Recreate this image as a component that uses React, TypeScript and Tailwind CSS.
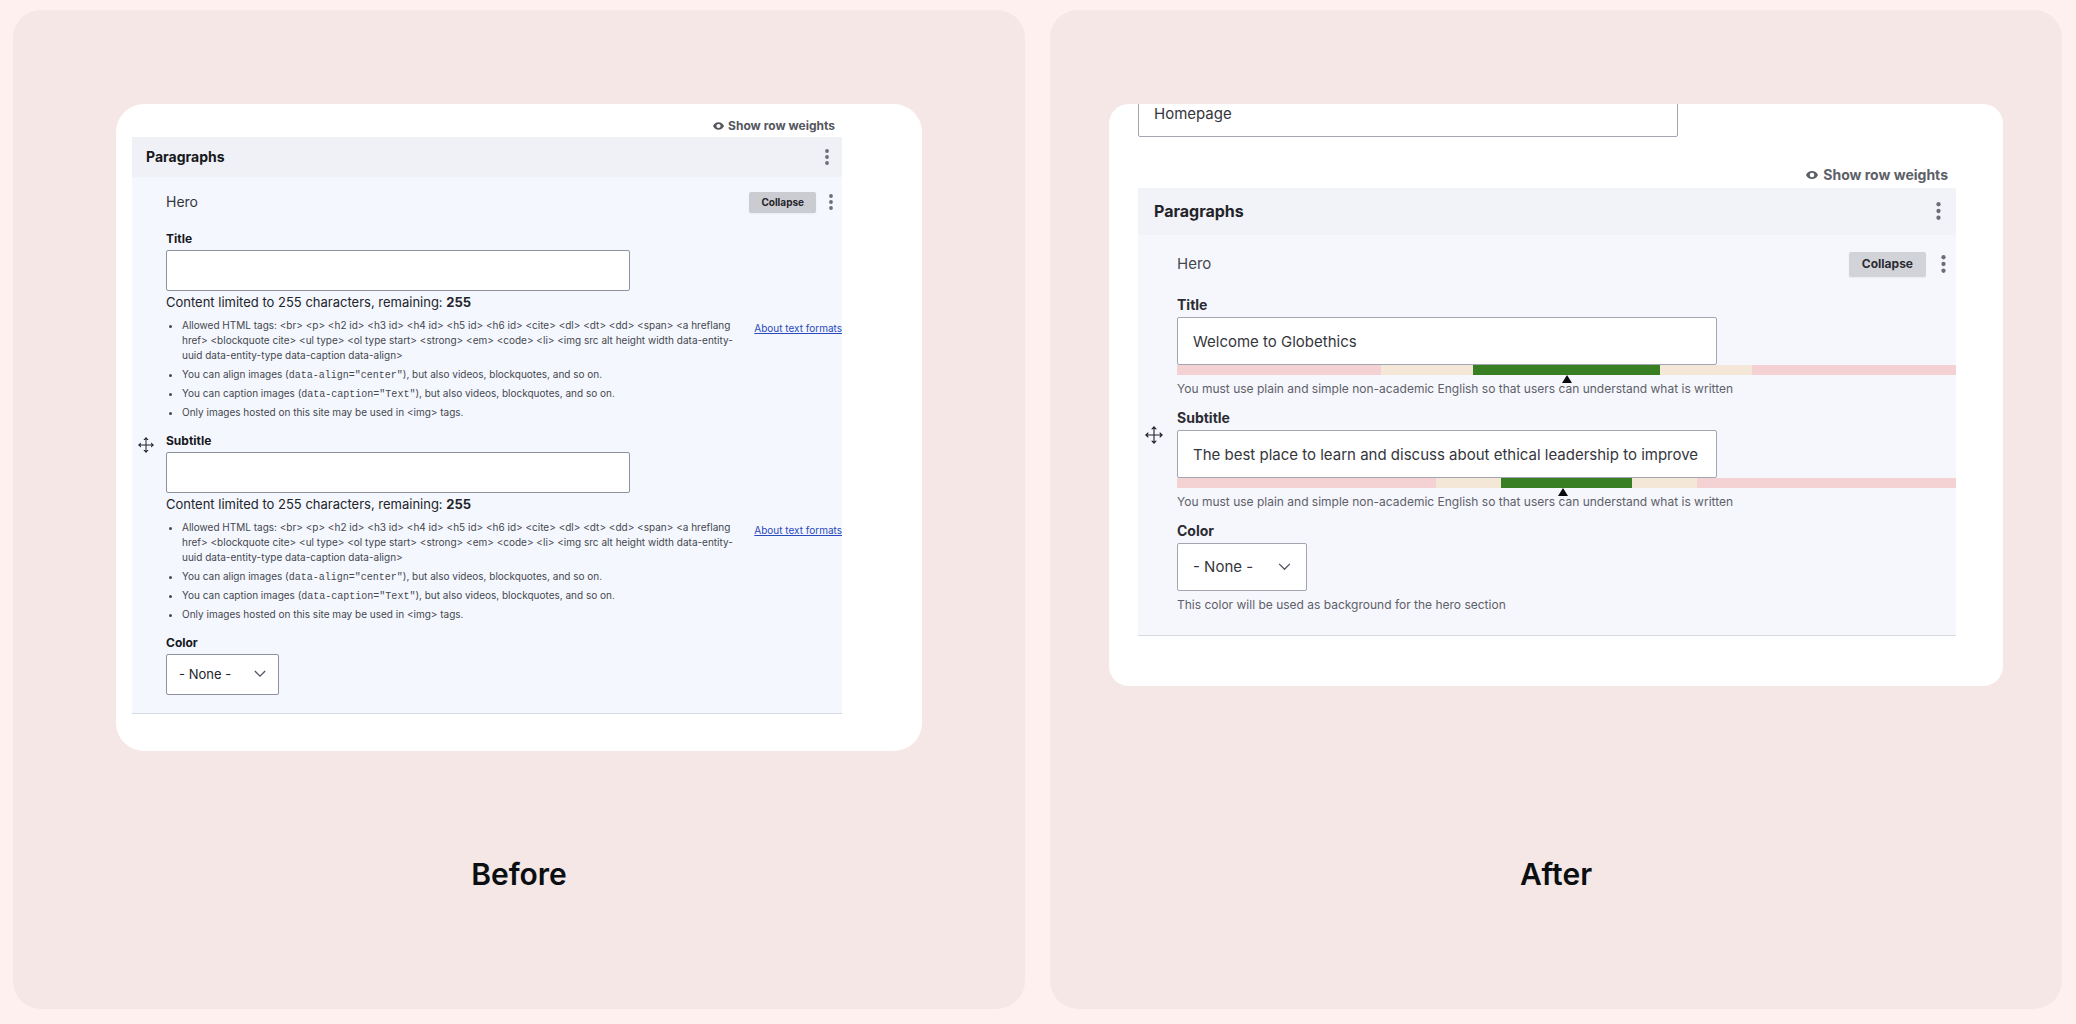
import type { ReactNode } from "react";

function EyeIcon({ className }: { className: string }) {
  return (
    <svg viewBox="0 0 12 8" className={className} aria-hidden="true">
      <path
        fillRule="evenodd"
        fill="currentColor"
        d="M6 0C3.300 0 1.100 1.600 0 4c1.100 2.400 3.300 4 6 4s4.900-1.600 6-4C10.900 1.600 8.700 0 6 0Zm0 6.300A2.300 2.300 0 1 1 6 1.700a2.300 2.300 0 0 1 0 4.600Z"
      />
    </svg>
  );
}

function DotsIcon({ className }: { className: string }) {
  return (
    <svg viewBox="0 0 4 16" className={className} fill="#6b6e76" aria-hidden="true">
      <circle cx="2" cy="2" r="1.900" />
      <circle cx="2" cy="8" r="1.900" />
      <circle cx="2" cy="14" r="1.900" />
    </svg>
  );
}

function MoveIcon({ className }: { className: string }) {
  return (
    <svg viewBox="0 0 16 16" className={className} aria-hidden="true">
      <path d="M8 1.500v13M1.500 8h13" stroke="#222330" strokeWidth="1" fill="none" />
      <path
        fill="#222330"
        d="M8 0l2.600 2.900H9L8 2 7 2.900H5.400ZM8 16l2.600-2.900H9L8 14l-1-.900H5.400ZM0 8l2.900-2.600V7L2 8l.900 1v1.600ZM16 8l-2.900-2.600V7l.900 1-.900 1v1.600Z"
      />
    </svg>
  );
}

function ChevronIcon({ className }: { className: string }) {
  return (
    <svg viewBox="0 0 14 9" className={className} fill="none" stroke="#545560" strokeWidth="1.500" aria-hidden="true">
      <path d="M1 1l6 6 6-6" />
    </svg>
  );
}

function Panel({ caption, children }: { caption: string; children: ReactNode }) {
  return (
    <figure className="relative flex min-w-0 flex-1 flex-col items-center rounded-[28px] bg-[#f4e7e5] pt-[94px]">
      {children}
      <figcaption className="absolute bottom-[113px] text-[30px] leading-[44px] font-semibold text-[#0b0f12]">
        {caption}
      </figcaption>
    </figure>
  );
}

function FormattedField({ id, label }: { id: string; label: string }) {
  return (
    <div>
      <label htmlFor={id} className="block text-[12px] leading-[22px] font-bold text-[#17181c]">
        {label}
      </label>
      <input
        id={id}
        type="text"
        className="block h-[41px] w-[464px] max-w-full rounded-xs border border-[#8e929c] bg-white px-3 text-[13px]"
      />
      <p className="text-[13px] leading-[22px] text-[#232429]">
        Content limited to 255 characters, remaining: <strong>255</strong>
      </p>
      <div className="mt-[5px] flex items-start justify-between gap-2">
        <ul className="ml-4 list-disc space-y-1 text-[10px] leading-[15px] text-[#45474e]">
          <li>
            Allowed HTML tags: &lt;br&gt; &lt;p&gt; &lt;h2 id&gt; &lt;h3 id&gt; &lt;h4 id&gt; &lt;h5 id&gt; &lt;h6
            id&gt; &lt;cite&gt; &lt;dl&gt; &lt;dt&gt; &lt;dd&gt; &lt;span&gt; &lt;a hreflang href&gt;
            &lt;blockquote cite&gt; &lt;ul type&gt; &lt;ol type start&gt; &lt;strong&gt; &lt;em&gt; &lt;code&gt;
            &lt;li&gt; &lt;img src alt height width data-entity-uuid data-entity-type data-caption data-align&gt;
          </li>
          <li>
            You can align images (
            <code className="font-['Liberation_Mono',monospace] leading-none">data-align="center"</code>), but also
            videos, blockquotes, and so on.
          </li>
          <li>
            You can caption images (
            <code className="font-['Liberation_Mono',monospace] leading-none">data-caption="Text"</code>), but also
            videos, blockquotes, and so on.
          </li>
          <li>Only images hosted on this site may be used in &lt;img&gt; tags.</li>
        </ul>
        <a href="#formats" className="mt-0.5 shrink-0 text-[10px] leading-4 text-[#2a49bd] underline">
          About text formats
        </a>
      </div>
    </div>
  );
}

function BeforeCard() {
  return (
    <div className="mx-[103px] self-stretch rounded-[28px] bg-white pr-20 pb-[37px] pl-4">
      <div className="flex h-[33px] items-center justify-end pt-[10px] pr-[7px]">
        <button className="flex items-center gap-1 text-[12px] leading-4 font-bold text-[#55575e]">
          <EyeIcon className="h-2 w-[11px]" />
          Show row weights
        </button>
      </div>
      <div className="flex h-10 items-center justify-between bg-[#f0f1f6] pr-[13px] pb-px pl-[14px]">
        <h2 className="text-[14px] font-bold text-[#17181c]">Paragraphs</h2>
        <button aria-label="Paragraphs actions">
          <DotsIcon className="h-4 w-1" />
        </button>
      </div>
      <div className="flex items-center border-b border-[#d4d9e4] bg-[#f4f7fe]">
        <button aria-label="Move Hero" className="flex w-[34px] shrink-0 justify-center pr-1.5">
          <MoveIcon className="size-4" />
        </button>
        <div className="min-w-0 flex-1 pt-[14px] pb-[18px]">
          <div className="flex h-[22px] items-center">
            <h3 className="flex-1 text-[14px] leading-5 text-[#35363c]">Hero</h3>
            <button className="h-[21px] rounded-xs bg-[#cbccd2] px-3 text-[10px] font-bold text-[#232429] shadow-xs">
              Collapse
            </button>
            <button aria-label="Hero actions" className="mr-[9px] ml-[13px]">
              <DotsIcon className="h-4 w-1" />
            </button>
          </div>
          <div className="mt-[15px] space-y-[10px]">
            <FormattedField id="before-title" label="Title" />
            <FormattedField id="before-subtitle" label="Subtitle" />
            <div>
              <label htmlFor="before-color" className="block text-[12px] leading-[22px] font-bold text-[#17181c]">
                Color
              </label>
              <div className="relative w-[113px]">
                <select
                  id="before-color"
                  className="block h-[41px] w-full appearance-none rounded-xs border border-[#8e929c] bg-white px-3 text-[13px] text-[#232429]"
                >
                  <option>- None -</option>
                </select>
                <ChevronIcon className="pointer-events-none absolute top-4 right-[13px] h-[8px] w-3" />
              </div>
            </div>
          </div>
        </div>
      </div>
    </div>
  );
}

type MeterProps = { segments: number[]; marker: number };

const METER_COLORS = ["bg-[#f4d1d3]", "bg-[#f4e7d7]", "bg-[#377f22]", "bg-[#f4e7d7]", "bg-[#f4d1d3]"];

function LengthMeter({ segments, marker }: MeterProps) {
  return (
    <div className="relative flex h-[10px]">
      {segments.map((grow, i) => (
        <div key={i} className={METER_COLORS[i]} style={{ flexGrow: grow, flexBasis: 0 }} />
      ))}
      <svg
        viewBox="0 0 10 8"
        className="absolute top-full h-2 w-[10px] -translate-x-1/2"
        style={{ left: `${marker}%` }}
        aria-hidden="true"
      >
        <path d="M5 0l5 8H0Z" fill="#0c0c0e" />
      </svg>
    </div>
  );
}

function MeteredField({ id, label, value, segments, marker }: { id: string; label: string; value: string } & MeterProps) {
  return (
    <div>
      <label htmlFor={id} className="block text-[14px] leading-6 font-bold text-[#2b2c32]">
        {label}
      </label>
      <input
        id={id}
        type="text"
        defaultValue={value}
        className="block h-12 w-[540px] max-w-full rounded-xs border border-[#a3a6b0] bg-white px-[15px] text-[15px] text-[#35363c]"
      />
      <LengthMeter segments={segments} marker={marker} />
      <p className="mt-1 text-[12px] leading-5 text-[#5d6068]">
        You must use plain and simple non-academic English so that users can understand what is written
      </p>
    </div>
  );
}

function AfterCard() {
  return (
    <div className="mx-[59px] self-stretch overflow-hidden rounded-[20px] bg-white pr-[47px] pb-[50px] pl-[29px]">
      <input
        aria-label="Page title"
        type="text"
        defaultValue="Homepage"
        className="-mt-[15px] block h-12 w-[540px] max-w-full rounded-xs border border-[#a3a6b0] bg-white px-[15px] text-[15px] text-[#35363c]"
      />
      <div className="flex h-[51px] items-end justify-end pr-2 pb-[3px]">
        <button className="flex items-center gap-[5px] text-[14px] leading-5 font-bold text-[#5d6068]">
          <EyeIcon className="h-2 w-3" />
          Show row weights
        </button>
      </div>
      <div className="flex h-[47px] items-center justify-between bg-[#f2f3f8] pr-[15px] pb-0.5 pl-4">
        <h2 className="text-[16px] font-bold text-[#232429]">Paragraphs</h2>
        <button aria-label="Paragraphs actions">
          <DotsIcon className="h-[18px] w-[5px]" />
        </button>
      </div>
      <div className="flex items-center border-b border-[#d8dae2] bg-[#f6f7fd]">
        <button aria-label="Move Hero" className="flex w-[39px] shrink-0 justify-center pr-[7px]">
          <MoveIcon className="size-[18px]" />
        </button>
        <div className="min-w-0 flex-1 pt-[16px] pb-[20px]">
          <div className="flex h-[26px] items-center">
            <h3 className="flex-1 text-[15px] text-[#45474e]">Hero</h3>
            <button className="h-[25px] rounded-xs bg-[#d2d3d8] px-[13px] text-[12px] font-bold text-[#2b2c32] shadow-xs">
              Collapse
            </button>
            <button aria-label="Hero actions" className="mr-[10px] ml-[15px]">
              <DotsIcon className="h-[18px] w-[5px]" />
            </button>
          </div>
          <div className="mt-4 space-y-[7px]">
            <MeteredField
              id="after-title"
              label="Title"
              value="Welcome to Globethics"
              segments={[204, 92, 186, 92, 204]}
              marker={50}
            />
            <MeteredField
              id="after-subtitle"
              label="Subtitle"
              value="The best place to learn and discuss about ethical leadership to improve"
              segments={[259, 65, 130, 65, 259]}
              marker={49.6}
            />
            <div>
              <label htmlFor="after-color" className="block text-[14px] leading-6 font-bold text-[#2b2c32]">
                Color
              </label>
              <div className="relative w-[130px]">
                <select
                  id="after-color"
                  className="block h-12 w-full appearance-none rounded-xs border border-[#a3a6b0] bg-white px-[15px] text-[15px] text-[#35363c]"
                >
                  <option>- None -</option>
                </select>
                <ChevronIcon className="pointer-events-none absolute top-5 right-4 h-[8px] w-[13px]" />
              </div>
              <p className="mt-1 text-[12px] leading-5 text-[#5d6068]">
                This color will be used as background for the hero section
              </p>
            </div>
          </div>
        </div>
      </div>
    </div>
  );
}

export default function App() {
  return (
    <main className="flex min-h-screen gap-[25px] bg-[#fdf0ef] pt-[10px] pr-[14px] pb-[15px] pl-[13px] font-['Inter',sans-serif]">
      <Panel caption="Before">
        <BeforeCard />
      </Panel>
      <Panel caption="After">
        <AfterCard />
      </Panel>
    </main>
  );
}
